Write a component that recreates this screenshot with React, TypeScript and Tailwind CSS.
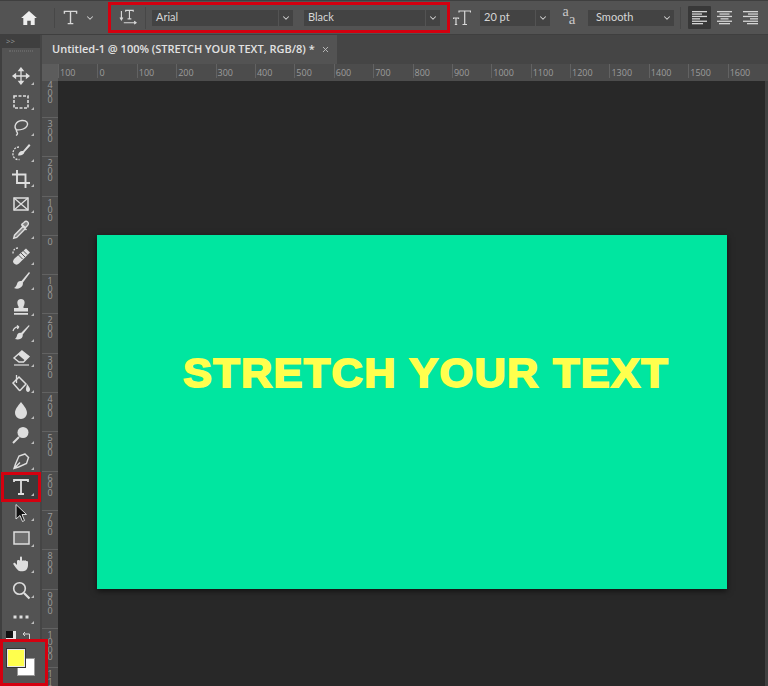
import type { ReactNode } from 'react';
import { ChevronDown, X } from 'lucide-react';

const hLabels = ['100', '0', '100', '200', '300', '400', '500', '600', '700', '800', '900', '1000', '1100', '1200', '1300', '1400', '1500', '1600'];
const vLabels = ['400', '300', '200', '100', '0', '100', '200', '300', '400', '500', '600', '700', '800', '900', '1000', '1100'];

const S = 'none';
const C = '#dedede';

// toolbar icons, drawn on a 20x20 box
const tools: { d: ReactNode; active?: boolean }[] = [
  { d: <path d="M10 2v16M2 10h16M10 2 8 4.500h4ZM10 18l-2-2.500h4ZM2 10l2.500-2v4ZM18 10l-2.500-2v4Z" fill={C} stroke={C} strokeWidth="1.300" /> },
  { d: <rect x="3" y="4" width="14" height="12" fill={S} stroke={C} strokeWidth="1.600" strokeDasharray="3 1.500" /> },
  { d: <path d="M5.500 13C2.500 10 4.500 4 11 3.500c5-.3 6.500 3 5 5.500-1.500 2.700-6.500 4-10.500 4Zm0 0c-.800 1.500 1 2 1 3.500-.100 1-.600 1.500-1.500 2" fill={S} stroke={C} strokeWidth="1.400" /> },
  { d: <><path d="M8 4C3 4 1.500 9 2 12c.400 3 3 5 6.500 4.500" fill={S} stroke={C} strokeWidth="1.300" strokeDasharray="2 1.200" /><path d="M18 1 12 8c-2.500-.500-4.500 1-5 4.500 3.500.500 6-1 6.500-3.500L19.500 2.500Z" fill={C} /></> },
  { d: <path d="M6 1v13h13M1 5.500h13.500V19" fill={S} stroke={C} strokeWidth="1.900" /> },
  { d: <><rect x="3" y="4" width="14" height="12" fill={S} stroke={C} strokeWidth="1.500" /><path d="m3 4 14 12M17 4 3 16" stroke={C} strokeWidth="1.300" /></> },
  { d: <path d="m12 6.500-8.500 8.700-.800 3 3-.800L14 9M10.500 5l5 5M13 2.500c1.500-1.500 2.800-1.300 3.700-.400s1 2.200-.400 3.600l-2 2-3.500-3.500Z" fill={C} fillOpacity="0.350" stroke={C} strokeWidth="1.400" /> },
  { d: <><path d="M7 2C4 2 2 4 2 7.500" fill={S} stroke={C} strokeWidth="1.300" strokeDasharray="2 1.200" /><path d="m15 2.500 4 4-11 11c-1.500 1.500-3.500 1.500-5 0s-1-3.500.500-5Z" fill={C} /><path d="m6.500 8 5 5M9 6l5 5M11.500 4l4.500 4.500" stroke="#535353" strokeWidth="1" /></> },
  { d: <path d="M18 1 10.500 10c-2.500-.500-4 .800-4.500 3-.300 1.500-1.500 3-3 4 3 1.500 7 .500 8.500-2.500.500-1.200.500-2 .300-2.700L19 2Z" fill={C} /> },
  { d: <path d="M7.500 9.500C5.500 6 6 2 10 2s4.500 4 2.500 7.500V11H17v3.500H3V11h4.500ZM3 16h14v1.800H3Z" fill={C} /> },
  { d: <><path d="M18 2 10 10c-2-.500-3.500.500-4 2.500-.300 1.500-1 2.500-2 3.500 3 1 6.500.300 7.500-2.300.300-1 .300-1.500.200-2.200L18.500 3Z" fill={C} /><path d="M2 8c1-3 3-4.500 6-4M8 4 6 2.500M8 4 6.200 5.800" fill={S} stroke={C} strokeWidth="1.200" /></> },
  { d: <><path d="M11 3 18 8.500 12.500 14H8L3 10Z" fill={S} stroke={C} strokeWidth="1.400" /><path d="M11 3 18 8.500 14 12.500 7 6.500Z" fill={C} /><path d="M3 17h15" stroke={C} strokeWidth="1.200" /></> },
  { d: <><path d="M2 9 8 3l7 7-5.500 6c-.500.500-1 .500-1.500 0Z" fill={S} stroke={C} strokeWidth="1.500" /><path d="M5.500 1v8" stroke={C} strokeWidth="1.300" /><path d="M16 10c2 2.500 3 4 3 5.500 0 1.500-1 2.500-2 2.500s-2-1-2-2.500c0-1.500.500-3 1-5.500Z" fill={C} /></> },
  { d: <path d="M10 2c3 4 6 7 6 11a6 6 0 0 1-12 0c0-4 3-7 6-11Z" fill={C} /> },
  { d: <><circle cx="12" cy="7.500" r="5.500" fill={C} /><path d="M8 12 2 18" stroke={C} strokeWidth="2" /></> },
  { d: <path d="M14 3 8 5 4.500 13l-1.500 4.500 4.500-1.500 8-3.500 2-6ZM3 17.500l6-6M14 3l4 4" fill={S} stroke={C} strokeWidth="1.400" /> },
  { d: <path d="M3 5V3h14v2M10 3v14M7 17h6" fill={S} stroke={C} strokeWidth="1.800" />, active: true },
  { d: <path d="m5 1.500 10.500 10H11l2.500 6-2 1-2.500-6L5 16Z" fill="#111" stroke={C} strokeWidth="1" /> },
  { d: <rect x="3" y="4" width="15" height="12" fill="#6e6e6e" stroke={C} strokeWidth="1.500" /> },
  { d: <path d="M9 7V3.500c0-1.500 2-1.500 2 0V7c.500-1 2-1 2 0 .500-1 2-.800 2 .300.800-.500 2-.200 2 1v3c0 3-2 6-5 6H9.500C8 17.300 6.500 16 5 14L2.500 10.500c-.800-1.200.800-2.300 1.800-1.300L6 11V7c0-1.500 3-1.500 3 0Z" fill={C} /> },
  { d: <><circle cx="8.500" cy="8.500" r="5.800" fill={S} stroke={C} strokeWidth="1.600" /><path d="m13 13 5.500 5.500" stroke={C} strokeWidth="2.200" /></> },
  { d: <path d="M2.500 10.500h3v3h-3ZM8.500 10.500h3v3h-3ZM14.500 10.500h3v3h-3Z" fill={C} /> },
];

function Tool({ children, active }: { children: ReactNode; active?: boolean }) {
  return (
    <div className={`relative h-[25.7px] flex items-center justify-center ${active ? 'bg-[#3c3c3c]' : ''}`}>
      <svg viewBox="0 0 20 20" className="w-[20px] h-[20px] mr-[1px]">{children}</svg>
      <span className="absolute right-[6px] bottom-[4px] w-0 h-0 border-l-[3px] border-l-transparent border-b-[3px] border-b-[#bbbbbb]" />
      {active && <span className="absolute -left-px -right-px -top-[2px] -bottom-[2px] border-[3px] border-[#d4000f]" />}
    </div>
  );
}

function Select({ label, w, chevronBox, pad = 'pl-[4px]' }: { label: string; w: string; chevronBox?: boolean; pad?: string }) {
  return (
    <div className={`${w} h-[16px] bg-[#434343] flex items-center font-['Lato',sans-serif] text-[11px] text-[#d6d6d6]`}>
      <span className={`flex-1 ${pad} truncate`}>{label}</span>
      {chevronBox && <span className="w-px h-full bg-[#535353]" />}
      <span className="w-[14px] flex justify-center"><ChevronDown size={10} strokeWidth={2.500} /></span>
    </div>
  );
}

function AlignIcon({ kind }: { kind: 'left' | 'center' | 'right' }) {
  const rows = [15, 10, 15, 8, 15, 11];
  return (
    <svg viewBox="0 0 15 15" className="w-[15px] h-[15px]">
      {rows.map((w, i) => {
        const x = kind === 'left' ? 0 : kind === 'right' ? 15 - w : (15 - w) / 2;
        return <rect key={i} x={x} y={1 + i * 2.400} width={w} height="1.300" fill="#d4d4d4" />;
      })}
    </svg>
  );
}

function OptionsBar() {
  return (
    <div className="h-[35px] shrink-0 flex items-center bg-[#535353] border-y border-[#3f3f3f]">
      <div className="w-[54px] flex justify-center pl-[3px]">
        <svg viewBox="0 0 18 16" className="w-[16px] h-[14px]">
          <path d="M9 0 0 8h2.500v8h4.500v-5h4v5h4.500V8H18Z" fill="#eeeeee" />
        </svg>
      </div>
      <span className="w-px h-[20px] bg-[#474747]" />
      <div className="w-[53px] flex items-center pl-[8px]">
        <svg viewBox="0 0 16 16" className="w-[15px] h-[15px]">
          <path d="M1.500 4V1.500h13V4M8 1.500v13M5 14.500h6" fill="none" stroke="#d8d8d8" strokeWidth="1.500" />
        </svg>
        <ChevronDown size={10} strokeWidth={2.500} className="ml-[7px] text-[#d0d0d0]" />
      </div>
      <div className="w-[342px] h-[31px] border-[3px] border-[#d4000f] flex items-center">
        <div className="w-[34px] flex justify-center">
          <svg viewBox="0 0 20 18" className="w-[19px] h-[17px]">
            <path d="M2.500 2v9M1 9l1.500 2.500L4 9M7 3V1.500h8V3M11 1.500v9M9 10.500h4M5 14.500h13M16 13l2 1.500-2 1.500" fill="none" stroke="#d8d8d8" strokeWidth="1.200" />
          </svg>
        </div>
        <span className="w-px h-[22px] bg-[#474747]" />
        <div className="ml-[6px]"><Select label="Arial" w="w-[141px]" chevronBox /></div>
        <div className="ml-[11px]"><Select label="Black" w="w-[136px]" chevronBox /></div>
      </div>
      <div className="w-[30px] flex pl-[3px]">
        <svg viewBox="0 0 18 16" className="w-[18px] h-[16px]">
          <path d="M6 2.500V1h11.500v1.500M11.700 1v13.500M9.500 14.500h4.500M.5 9V8h5v1M3 8v6.500M1.800 14.500h2.400" fill="none" stroke="#d8d8d8" strokeWidth="1.200" />
        </svg>
      </div>
      <Select label="20 pt" w="w-[70px]" chevronBox />
      <div className="w-[38px] flex justify-center text-[#c8c8c8] font-['Liberation_Serif',serif] leading-none">
        <span className="text-[14px] -mt-[4px]">a</span><span className="text-[15px] mt-[3px]">a</span>
      </div>
      <Select label="Smooth" w="w-[86px]" pad="pl-[8px]" />
      <span className="ml-[6px] w-px h-[22px] bg-[#474747]" />
      <div className="ml-[7px] w-[23px] h-[23px] bg-[#383838] flex items-center justify-center rounded-[1px]"><AlignIcon kind="left" /></div>
      <div className="w-[26px] flex justify-center"><AlignIcon kind="center" /></div>
      <div className="w-[26px] flex justify-center"><AlignIcon kind="right" /></div>
    </div>
  );
}

function Toolbar() {
  return (
    <div className="relative w-[42px] shrink-0 bg-[#535353] border-l-2 border-r-2 border-l-[#3f3f3f] border-r-[#454545]">
      <div className="h-[13px] bg-[#3f3f3f] text-[8px] leading-[12px] pl-[4px] text-[#9a9a9a]">&gt;&gt;</div>
      <div className="h-[15px] flex justify-center pt-[2px]">
        <span className="w-[24px] h-[2px] border-y border-dotted border-[#666666]" />
      </div>
      {tools.map((t, i) => (
        <Tool key={i} active={t.active}>{t.d}</Tool>
      ))}
      <div className="flex items-center gap-[6px] pl-[4px] mt-[3px]">
        <span className="relative w-[10px] h-[10px] bg-[#e8e8e8]"><span className="absolute left-0 top-0 w-[7px] h-[7px] bg-[#111]" /></span>
        <svg viewBox="0 0 10 10" className="w-[10px] h-[10px]">
          <path d="M1 3h6.500v5M1 3l2-2M1 3l2 2" fill="none" stroke="#d8d8d8" strokeWidth="1" />
        </svg>
      </div>
      <div className="absolute left-[-2px] bottom-0 w-[48px] h-[47px] border-[3px] border-[#d4000f] bg-[#535353] z-10">
        <span className="absolute left-[14px] top-[16px] w-[18px] h-[18px] bg-white border border-[#999]" />
        <span className="absolute left-[4px] top-[7px] w-[18px] h-[18px] bg-[#ffff4d] border border-[#e8e8e8] outline outline-[#333]" />
      </div>
    </div>
  );
}

function Rulers() {
  return (
    <div className="h-[17px] shrink-0 flex bg-[#4c4c4c] text-[9px] leading-[18px] text-[#9c9c9c] overflow-hidden">
      <div className="w-[16px] shrink-0 bg-[#5c5c5c]" />
      {hLabels.map((l, i) => (
        <div key={i} className="w-[39.400px] shrink-0 border-l border-[#626262] pl-[1px] h-[14px]">{l}</div>
      ))}
    </div>
  );
}

function VRuler() {
  return (
    <div className="w-[16px] shrink-0 bg-[#4c4c4c] text-[9px] leading-[7.500px] text-[#9c9c9c] flex flex-col overflow-hidden">
      {vLabels.map((l, i) => (
        <div key={i} className={`w-full shrink-0 ${i === 0 ? 'h-[36px]' : 'h-[39.300px] border-t border-[#626262] pt-[2px]'}`}>
          <div className="w-[7px] mx-auto break-all text-center">{l}</div>
        </div>
      ))}
    </div>
  );
}

export default function App() {
  return (
    <div className="w-[768px] h-[686px] flex flex-col overflow-hidden bg-[#535353] font-['Open_Sans',sans-serif]">
      <OptionsBar />
      <div className="flex-1 flex min-h-0">
        <Toolbar />
        <div className="flex-1 flex flex-col min-w-0">
          <div className="h-[29px] shrink-0 bg-[#454545] flex">
            <div className="w-[295px] bg-[#535353] flex items-center pl-[10px] text-[11px] font-semibold text-[#e2e2e2] whitespace-nowrap">
              Untitled-1 @ 100% (STRETCH YOUR TEXT, RGB/8) *
              <X size={9} strokeWidth={2.500} className="ml-[6px] text-[#bdbdbd]" />
            </div>
          </div>
          <Rulers />
          <div className="flex-1 flex min-h-0">
            <VRuler />
            <div className="flex-1 bg-[#282828] pl-[39px] pt-[154px]">
              <div className="w-[630px] h-[354px] bg-[#00e6a0] shadow-[0_2px_6px_rgba(0,0,0,0.6)] flex items-center pl-[86px] pb-[78px]">
                <span className="origin-left scale-x-[1.058] text-[41px] leading-none font-bold font-['Liberation_Sans',sans-serif] tracking-[1.2px] text-[#ffff4d] whitespace-nowrap [-webkit-text-stroke:1.8px_#ffff4d]">
                  STRETCH YOUR TEXT
                </span>
              </div>
            </div>
            <div className="w-[3px] bg-[#404040]" />
          </div>
        </div>
      </div>
    </div>
  );
}
